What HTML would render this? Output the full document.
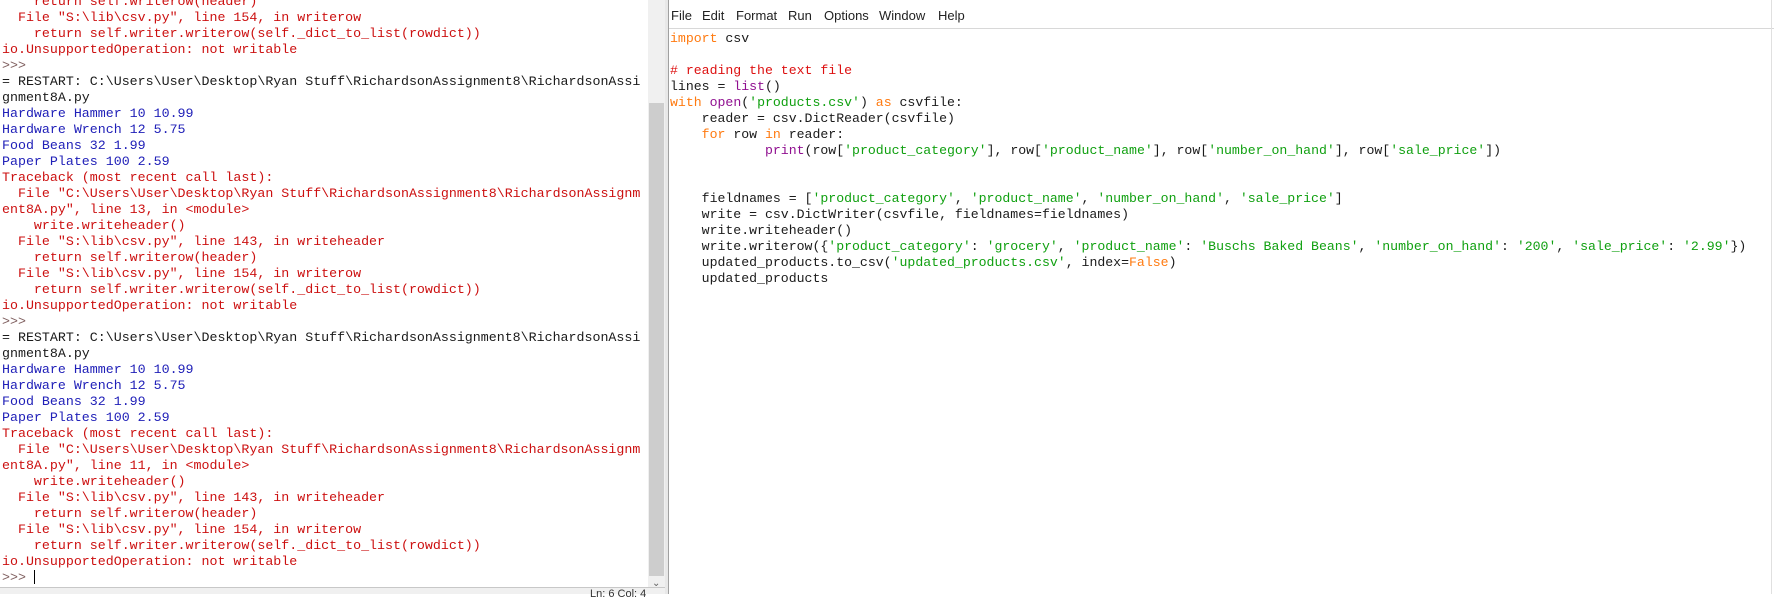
<!DOCTYPE html>
<html><head><meta charset="utf-8"><style>
*{margin:0;padding:0}
body{width:1774px;height:594px;overflow:hidden;background:#fff;position:relative;font-family:"Liberation Mono",monospace}
pre{position:absolute;font-family:"Liberation Mono",monospace;font-size:13.3px;line-height:16px;white-space:pre;color:#1a1a1a}
.r{color:#cc1010}.b{color:#2020b8}.p{color:#806060}
.k{color:#ff7a10}.s{color:#10a010}.c{color:#dd1010}.f{color:#901090}
.menu span{position:absolute;top:8px;font-family:"Liberation Sans",sans-serif;font-size:13px;color:#222}
</style></head><body>
<pre style="left:2px;top:-6px"><span class="r">    return self.writerow(header)
  File "S:\lib\csv.py", line 154, in writerow
    return self.writer.writerow(self._dict_to_list(rowdict))
io.UnsupportedOperation: not writable</span>
<span class="p">&gt;&gt;&gt;</span>
= RESTART: C:\Users\User\Desktop\Ryan Stuff\RichardsonAssignment8\RichardsonAssi
gnment8A.py
<span class="b">Hardware Hammer 10 10.99
Hardware Wrench 12 5.75
Food Beans 32 1.99
Paper Plates 100 2.59</span>
<span class="r">Traceback (most recent call last):
  File "C:\Users\User\Desktop\Ryan Stuff\RichardsonAssignment8\RichardsonAssignm
ent8A.py", line 13, in &lt;module&gt;
    write.writeheader()
  File "S:\lib\csv.py", line 143, in writeheader
    return self.writerow(header)
  File "S:\lib\csv.py", line 154, in writerow
    return self.writer.writerow(self._dict_to_list(rowdict))
io.UnsupportedOperation: not writable</span>
<span class="p">&gt;&gt;&gt;</span>
= RESTART: C:\Users\User\Desktop\Ryan Stuff\RichardsonAssignment8\RichardsonAssi
gnment8A.py
<span class="b">Hardware Hammer 10 10.99
Hardware Wrench 12 5.75
Food Beans 32 1.99
Paper Plates 100 2.59</span>
<span class="r">Traceback (most recent call last):
  File "C:\Users\User\Desktop\Ryan Stuff\RichardsonAssignment8\RichardsonAssignm
ent8A.py", line 11, in &lt;module&gt;
    write.writeheader()
  File "S:\lib\csv.py", line 143, in writeheader
    return self.writerow(header)
  File "S:\lib\csv.py", line 154, in writerow
    return self.writer.writerow(self._dict_to_list(rowdict))
io.UnsupportedOperation: not writable</span>
<span class="p">&gt;&gt;&gt;</span></pre>
<div style="position:absolute;left:34px;top:570px;width:1px;height:14px;background:#000"></div>
<div style="position:absolute;left:648px;top:0;width:17px;height:588px;background:#f0f0f0"></div>
<div style="position:absolute;left:649px;top:103px;width:15px;height:473px;background:#cdcdcd"></div>
<div style="position:absolute;left:652px;top:578px;font-family:'Liberation Sans',sans-serif;font-size:10px;color:#606060">&#8964;</div>
<div style="position:absolute;left:0;top:587px;width:665px;height:1px;background:#c8c8c8"></div>
<div style="position:absolute;left:0;top:588px;width:665px;height:6px;background:#f0f0f0"></div>
<div style="position:absolute;left:590px;top:588px;font-family:'Liberation Sans',sans-serif;font-size:11px;color:#333;line-height:12px">Ln: 6 Col: 4</div>
<div style="position:absolute;left:665px;top:0;width:3px;height:594px;background:#e8e8e8"></div>
<div style="position:absolute;left:668px;top:0;width:1px;height:594px;background:#a0a0a0"></div>
<div class="menu"><span style="left:671px">File</span><span style="left:702px">Edit</span><span style="left:736px">Format</span><span style="left:788px">Run</span><span style="left:824px">Options</span><span style="left:879px">Window</span><span style="left:938px">Help</span></div>
<div style="position:absolute;left:669px;top:28px;width:1105px;height:1px;background:#d8d8d8"></div>
<pre style="left:670px;top:30.6px;font-size:13.2px"><span class="k">import</span> csv

<span class="c"># reading the text file</span>
lines = <span class="f">list</span>()
<span class="k">with</span> <span class="f">open</span>(<span class="s">'products.csv'</span>) <span class="k">as</span> csvfile:
    reader = csv.DictReader(csvfile)
    <span class="k">for</span> row <span class="k">in</span> reader:
            <span class="f">print</span>(row[<span class="s">'product_category'</span>], row[<span class="s">'product_name'</span>], row[<span class="s">'number_on_hand'</span>], row[<span class="s">'sale_price'</span>])


    fieldnames = [<span class="s">'product_category'</span>, <span class="s">'product_name'</span>, <span class="s">'number_on_hand'</span>, <span class="s">'sale_price'</span>]
    write = csv.DictWriter(csvfile, fieldnames=fieldnames)
    write.writeheader()
    write.writerow({<span class="s">'product_category'</span>: <span class="s">'grocery'</span>, <span class="s">'product_name'</span>: <span class="s">'Buschs Baked Beans'</span>, <span class="s">'number_on_hand'</span>: <span class="s">'200'</span>, <span class="s">'sale_price'</span>: <span class="s">'2.99'</span>})
    updated_products.to_csv(<span class="s">'updated_products.csv'</span>, index=<span class="k">False</span>)
    updated_products</pre>
<div style="position:absolute;left:1771px;top:0;width:1px;height:594px;background:#e0e0e0"></div>
</body></html>
